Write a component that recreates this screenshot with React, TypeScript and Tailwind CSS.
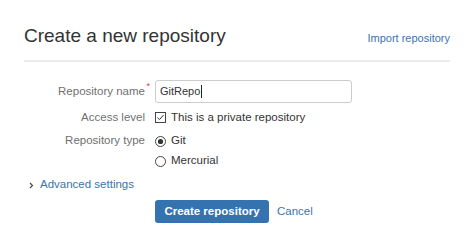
import type { ReactNode } from "react";

function Label({ children, required }: { children: ReactNode; required?: boolean }) {
  return (
    <div className="relative flex items-center justify-end text-right text-[11.5px] text-[#707070]">
      {children}
      {required && (
        <span className="absolute -right-[5px] top-[0px] text-[9px] text-[#d04437]">*</span>
      )}
    </div>
  );
}

function CheckIcon() {
  return (
    <svg width="11" height="11" viewBox="0 0 11 11" className="shrink-0">
      <rect x="0.5" y="0.5" width="10" height="10" fill="#fff" stroke="#444" />
      <path d="M2.4 5.5 L4.5 7.6 L8.6 3" fill="none" stroke="#333" strokeWidth="1" />
    </svg>
  );
}

function Radio({ checked }: { checked?: boolean }) {
  return (
    <svg width="11" height="11" viewBox="0 0 11 11" className="shrink-0">
      <circle cx="5.5" cy="5.5" r="5" fill="#fff" stroke="#444" />
      {checked && <circle cx="5.5" cy="5.5" r="2.6" fill="#333" />}
    </svg>
  );
}

export default function App() {
  return (
    <div
      className="h-[252px] w-[474px] overflow-hidden bg-white text-[#333]"
      style={{ fontFamily: '"Liberation Sans", Arial, sans-serif' }}
    >
      <div className="mx-[24px] pt-[24px]">
        <div className="flex items-baseline justify-between pb-[12px]">
          <h1 className="text-[19px] leading-[24px] text-[#333]">Create a new repository</h1>
          <a className="text-[11px] text-[#3b73af]">Import repository</a>
        </div>
        <div className="h-[2px] bg-[#ececec]" />
      </div>

      <div className="mt-[18px] grid grid-cols-[145px_1fr] gap-x-[10px]">
        <Label required>Repository name</Label>
        <div className="flex h-[23px] w-[197px] items-center rounded-[3px] border border-[#ccc] pl-[4px] text-[11px] text-[#333]">
          GitRepo
          <span className="ml-px h-[13px] w-px bg-[#222]" />
        </div>

        <div className="mt-[4px] grid h-[21px]">
          <Label>Access level</Label>
        </div>
        <div className="mt-[4px] flex h-[21px] items-center gap-[5px] text-[11.5px]">
          <CheckIcon />
          This is a private repository
        </div>

        <div className="mt-[3px] grid h-[20px]">
          <Label>Repository type</Label>
        </div>
        <div className="mt-[3px] flex flex-col text-[11.5px]">
          <div className="flex h-[20px] items-center gap-[5px]">
            <Radio checked />
            Git
          </div>
          <div className="flex h-[20px] items-center gap-[5px]">
            <Radio />
            Mercurial
          </div>
        </div>
      </div>

      <div className="mt-[4px] flex h-[20px] items-center pl-[29px] text-[11.5px] text-[#3b73af]">
        <svg width="5" height="7" viewBox="0 0 5 7" className="mr-[6px]">
          <path d="M1 1 L3.5 3.5 L1 6" fill="none" stroke="#444" strokeWidth="1.1" />
        </svg>
        Advanced settings
      </div>

      <div className="mt-[5px] flex items-center pl-[155px]">
        <button className="h-[23px] w-[114px] rounded-[3px] bg-[#3572b0] text-[11.5px] font-bold text-white">
          Create repository
        </button>
        <a className="ml-[8px] text-[11.5px] text-[#3b73af]">Cancel</a>
      </div>
    </div>
  );
}
